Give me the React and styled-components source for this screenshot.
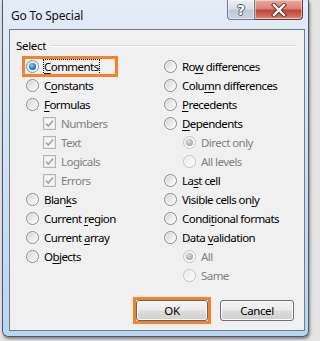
import React from "react";
import styled, { createGlobalStyle } from "styled-components";

const Global = createGlobalStyle`
  html, body { margin: 0; padding: 0; }
  body {
    background: #e4e4e4;
    font-family: "Noto Sans", "Open Sans", sans-serif;
  }
  #root { width: 313px; height: 341px; overflow: hidden; }
`;

const Page = styled.div`
  width: 313px;
  height: 341px;
  padding-left: 2px;
  box-sizing: border-box;
`;

const Window = styled.div`
  width: 307px;
  box-sizing: border-box;
  border: 1px solid #4c5b6b;
  border-top: none;
  border-radius: 0 0 6px 6px;
  padding: 0 3px 5px 6px;
  background: linear-gradient(180deg, #e3ecf6 0%, #d3e3f3 40%, #b8d5f4 100%);
  box-shadow: 1px 2px 3px rgba(0, 0, 0, 0.45);
`;

const TitleBar = styled.div`
  height: 29px;
  display: flex;
  justify-content: space-between;
  align-items: flex-start;
`;

const Title = styled.div`
  padding: 8px 0 0 2px;
  font-size: 12px;
  letter-spacing: -0.2px;
  line-height: 16px;
  color: #111;
`;

const Caption = styled.div`
  display: flex;
  margin-right: 2px;
`;

const CapButton = styled.div`
  width: ${(p) => p.$w}px;
  height: 20px;
  box-sizing: border-box;
  border: 1px solid ${(p) => (p.$close ? "#6b3a36" : "#6f7b88")};
  border-top: none;
  border-left-width: ${(p) => (p.$close ? 0 : 1)}px;
  border-radius: ${(p) => (p.$close ? "0 0 4px 0" : "0 0 0 4px")};
  background: ${(p) =>
    p.$close
      ? "linear-gradient(180deg, #e6aa9e 0%, #d98375 45%, #c4453a 55%, #d26a5a 85%, #e39a84 100%)"
      : "linear-gradient(180deg, #e9eef4 0%, #d7e0e9 45%, #bccad7 55%, #c9d5e1 100%)"};
  box-shadow: inset 0 0 0 1px rgba(255, 255, 255, 0.45);
  display: flex;
  align-items: center;
  justify-content: center;
`;

const HelpGlyph = styled.span`
  font-family: "DejaVu Sans", sans-serif;
  font-weight: bold;
  font-size: 14px;
  line-height: 14px;
  color: #fff;
  text-shadow: -1px 0 #4f5963, 1px 0 #4f5963, 0 -1px #4f5963, 0 1px #4f5963;
`;

const Client = styled.div`
  border: 1px solid #6f7c8a;
  background: #f0f0f0;
  padding: 8px 7px 9px 6px;
  display: flex;
  flex-direction: column;
`;

const GroupHeader = styled.div`
  height: 15px;
  display: flex;
  align-items: center;
  gap: 4px;
  font-size: 11.5px;
  letter-spacing: -0.3px;
  color: #000;
`;

const GroupLine = styled.div`
  flex: 1;
  height: 0;
  border-top: 1px solid #d5dadf;
  border-bottom: 1px solid #ffffff;
`;

const Columns = styled.div`
  margin-top: 4px;
  padding-left: 10px;
  display: grid;
  grid-template-columns: 138px 1fr;
`;

const Column = styled.div`
  display: flex;
  flex-direction: column;
`;

const Row = styled.div`
  position: relative;
  height: 19px;
  display: flex;
  align-items: center;
  gap: 2px;
  padding-left: ${(p) => p.$indent || 0}px;
  font-size: 11.5px;
  letter-spacing: -0.55px;
  color: ${(p) => (p.$disabled ? "#808080" : "#000")};
`;

const Label = styled.span`
  border: 1px ${(p) => (p.$focused ? "dotted #000" : "solid transparent")};
  line-height: 14px;
  white-space: nowrap;
`;

const Key = styled.span`
  text-decoration: underline;
  text-underline-offset: 2px;
`;

const RadioCircle = styled.span`
  flex: none;
  width: 13px;
  height: 13px;
  box-sizing: border-box;
  border-radius: 50%;
  border: 1px solid ${(p) => (p.$disabled ? "#c4c4c4" : "#8c8e90")};
  background: ${(p) =>
    p.$disabled
      ? "linear-gradient(135deg, #e6e6e6 0%, #f6f6f6 60%, #fcfcfc 100%)"
      : "linear-gradient(135deg, #cfcfcf 0%, #ececec 55%, #ffffff 100%)"};
  box-shadow: inset 0 0 0 1px rgba(255, 255, 255, 0.6);
  display: flex;
  align-items: center;
  justify-content: center;
  margin-right: 2px;
  &::after {
    content: "";
    display: ${(p) => (p.$checked ? "block" : "none")};
    width: 7px;
    height: 7px;
    border-radius: 50%;
    background: ${(p) =>
      p.$disabled
        ? "radial-gradient(circle at 40% 35%, #e0e0e0 0%, #b4b4b4 55%, #8e8e8e 100%)"
        : "radial-gradient(circle at 40% 35%, #8fd0f6 0%, #2a84cc 50%, #0b3f75 100%)"};
  }
`;

const CheckBox = styled.span`
  flex: none;
  width: 13px;
  height: 13px;
  box-sizing: border-box;
  border: 1px solid #b5b5b5;
  background: #f6f6f6;
  box-shadow: inset 0 0 0 1px #e8e8e8;
  display: flex;
  align-items: center;
  justify-content: center;
  margin-right: 2px;
`;

const Highlight = styled.div`
  position: absolute;
  left: ${(p) => p.$left}px;
  top: ${(p) => p.$top}px;
  width: ${(p) => p.$w}px;
  height: ${(p) => p.$h}px;
  box-sizing: border-box;
  border: 3px solid #f5822a;
  pointer-events: none;
`;

const Footer = styled.div`
  margin-top: 15px;
  padding-right: 3px;
  display: flex;
  justify-content: flex-end;
  gap: 12px;
`;

const Button = styled.div`
  position: relative;
  width: ${(p) => p.$w}px;
  height: 21px;
  box-sizing: border-box;
  border: 1px solid ${(p) => (p.$default ? "#5b6470" : "#707070")};
  border-radius: 3px;
  background: linear-gradient(180deg, #f3f3f3 0%, #ebebeb 48%, #dddddd 52%, #cfcfcf 100%);
  box-shadow: inset 0 0 0 1px #fbfbfb;
  display: flex;
  align-items: center;
  justify-content: center;
  font-size: 11.5px;
  letter-spacing: -0.4px;
  color: #000;
`;

const Radio = ({ checked, disabled, indent, keyIdx, text, focused, children }) => {
  let content = text;
  if (keyIdx !== undefined) {
    content = (
      <>
        {text.slice(0, keyIdx)}
        <Key>{text[keyIdx]}</Key>
        {text.slice(keyIdx + 1)}
      </>
    );
  }
  return (
    <Row $indent={indent} $disabled={disabled}>
      <RadioCircle $checked={checked} $disabled={disabled} />
      <Label $focused={focused}>{content}</Label>
      {children}
    </Row>
  );
};

const Check = ({ text }) => (
  <Row $indent={17} $disabled>
    <CheckBox>
      <svg width="11" height="11" viewBox="0 0 11 11">
        <path d="M2 5.6 L4.3 8 L9 2.6" fill="none" stroke="#a3a3a3" strokeWidth="1.6" />
      </svg>
    </CheckBox>
    <Label>{text}</Label>
  </Row>
);

export default function App() {
  return (
    <Page>
      <Global />
      <Window>
        <TitleBar>
          <Title>Go To Special</Title>
          <Caption>
            <CapButton $w={28}>
              <HelpGlyph>?</HelpGlyph>
            </CapButton>
            <CapButton $w={48} $close>
              <svg width="16" height="14" viewBox="0 0 16 14">
                <path d="M3 2 L13 12 M13 2 L3 12" stroke="#5a2a26" strokeWidth="4.2" strokeLinecap="square" />
                <path d="M3 2 L13 12 M13 2 L3 12" stroke="#ffffff" strokeWidth="2.4" strokeLinecap="square" />
              </svg>
            </CapButton>
          </Caption>
        </TitleBar>
        <Client>
          <GroupHeader>
            <span>Select</span>
            <GroupLine />
          </GroupHeader>
          <Columns>
            <Column>
              <Radio checked text="Comments" keyIdx={0} focused>
                <Highlight $left={-4} $top={-1} $w={96} $h={21} />
              </Radio>
              <Radio text="Constants" keyIdx={1} />
              <Radio text="Formulas" keyIdx={0} />
              <Check text="Numbers" />
              <Check text="Text" />
              <Check text="Logicals" />
              <Check text="Errors" />
              <Radio text="Blanks" keyIdx={4} />
              <Radio text="Current region" keyIdx={8} />
              <Radio text="Current array" keyIdx={8} />
              <Radio text="Objects" keyIdx={1} />
            </Column>
            <Column>
              <Radio text="Row differences" keyIdx={2} />
              <Radio text="Column differences" keyIdx={4} />
              <Radio text="Precedents" keyIdx={0} />
              <Radio text="Dependents" keyIdx={0} />
              <Radio text="Direct only" indent={19} checked disabled />
              <Radio text="All levels" indent={19} disabled />
              <Radio text="Last cell" keyIdx={2} />
              <Radio text="Visible cells only" keyIdx={16} />
              <Radio text="Conditional formats" keyIdx={5} />
              <Radio text="Data validation" keyIdx={5} />
              <Radio text="All" indent={19} checked disabled />
              <Radio text="Same" indent={19} disabled />
            </Column>
          </Columns>
          <Footer>
            <Button $w={72} $default>
              OK
              <Highlight $left={-4} $top={-4} $w={78} $h={27} />
            </Button>
            <Button $w={74}>Cancel</Button>
          </Footer>
        </Client>
      </Window>
    </Page>
  );
}
